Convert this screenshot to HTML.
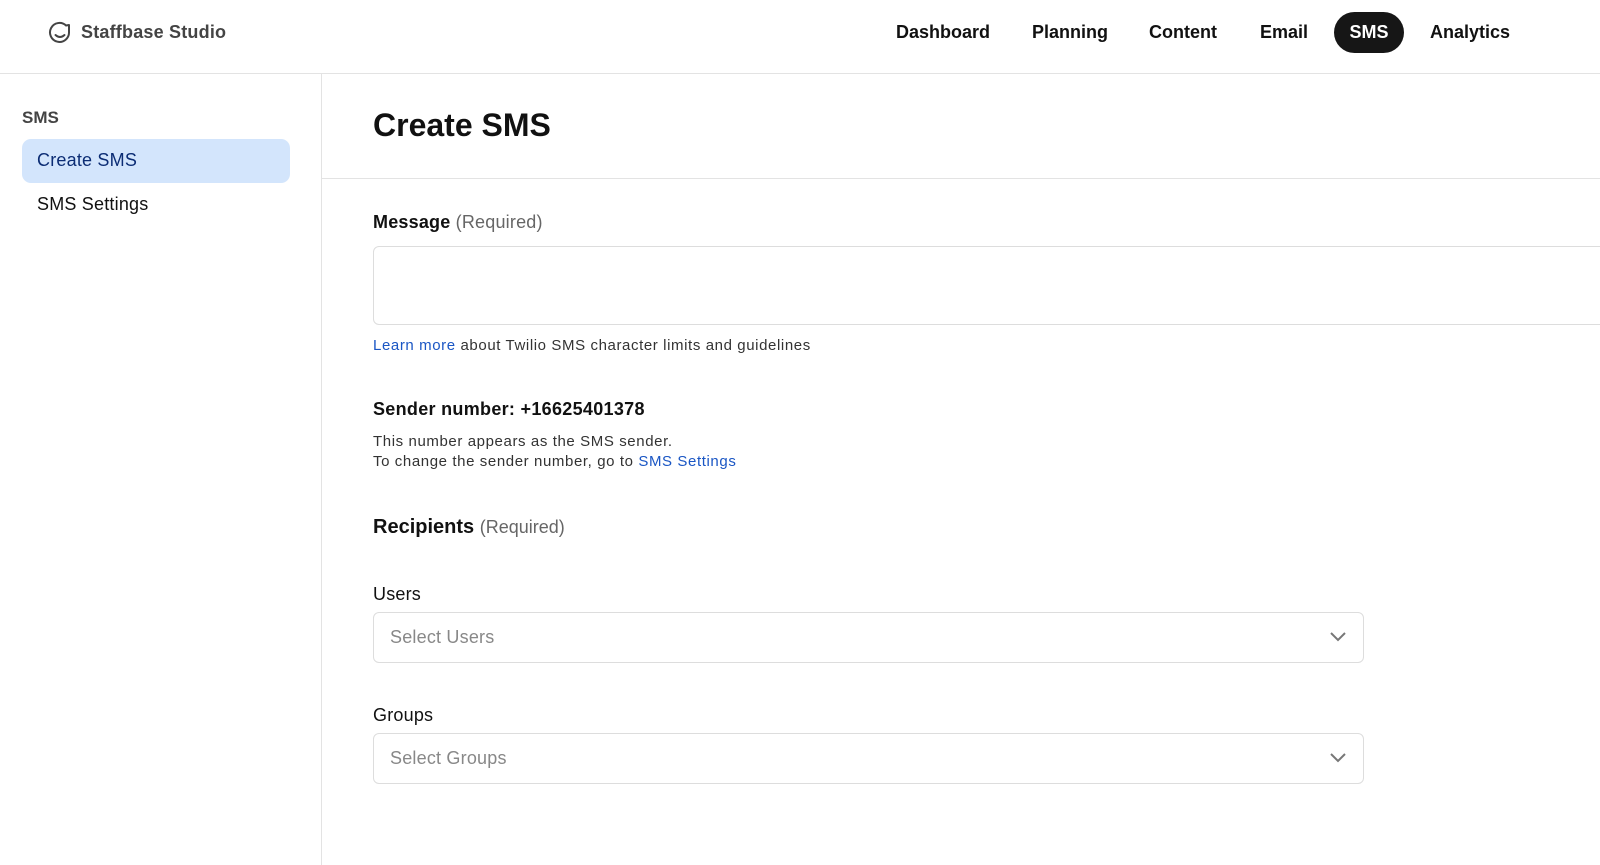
<!DOCTYPE html>
<html><head><meta charset="utf-8"><style>
*{margin:0;padding:0;box-sizing:border-box}
body{width:1600px;height:865px;overflow:hidden;background:#fff;font-family:"Liberation Sans",Arial,sans-serif;color:#111;position:relative}
.a{position:absolute;white-space:nowrap}
.nav{font-size:18px;font-weight:bold;top:22px;color:#111}
.lbl{font-size:18px;letter-spacing:0.2px}
.gray{color:#666;font-weight:normal}
.sel{position:absolute;left:373px;width:991px;height:51px;border:1px solid #ddd;border-radius:6px;font-size:18px;color:#888;padding-left:16px;line-height:49px;letter-spacing:0.2px}
.sel svg{position:absolute;right:16px;top:17px}
</style></head><body>
<div class="a" style="left:0;top:73px;width:1600px;height:1px;background:#e3e3e3"></div>
<div class="a" style="left:321px;top:73px;width:1px;height:792px;background:#e3e3e3"></div>
<div class="a" style="left:322px;top:178px;width:1278px;height:1px;background:#e3e3e3"></div>
<svg class="a" style="left:48px;top:21px" width="24" height="24" viewBox="0 0 24 24"><path d="M18 4.5 A9.5 9.5 0 1 0 21 11 L21 4 Z" fill="none" stroke="#444" stroke-width="2" stroke-linejoin="round"/><path d="M7.5 14 Q12 18 16.5 14" fill="none" stroke="#444" stroke-width="2" stroke-linecap="round"/></svg>
<div class="a" style="left:81px;top:22px;font-size:18px;font-weight:bold;color:#444;letter-spacing:0.2px">Staffbase Studio</div>
<div class="a nav" style="left:896px">Dashboard</div>
<div class="a nav" style="left:1032px">Planning</div>
<div class="a nav" style="left:1149px">Content</div>
<div class="a nav" style="left:1260px">Email</div>
<div class="a" style="left:1334px;top:12px;width:70px;height:41px;border-radius:21px;background:#161616;color:#fff;font-size:18px;font-weight:bold;text-align:center;line-height:41px">SMS</div>
<div class="a nav" style="left:1430px">Analytics</div>
<div class="a" style="left:22px;top:108px;font-size:17px;font-weight:bold;color:#444">SMS</div>
<div class="a" style="left:22px;top:139px;width:268px;height:44px;border-radius:9px;background:#d3e5fc"></div>
<div class="a" style="left:37px;top:150px;font-size:18px;color:#0b2c74;letter-spacing:0.2px">Create SMS</div>
<div class="a" style="left:37px;top:194px;font-size:18px;color:#111;letter-spacing:0.2px">SMS Settings</div>
<div class="a" style="left:373px;top:107px;font-size:32px;font-weight:bold">Create SMS</div>
<div class="a lbl" style="left:373px;top:212px"><b>Message</b> <span class="gray">(Required)</span></div>
<div class="a" style="left:373px;top:246px;width:1240px;height:79px;border:1px solid #ddd;border-radius:6px"></div>
<div class="a" style="left:373px;top:337px;font-size:15px;color:#333;letter-spacing:0.6px"><span style="color:#1a56c4">Learn more</span> about Twilio SMS character limits and guidelines</div>
<div class="a" style="left:373px;top:399px;font-size:18px;font-weight:bold;letter-spacing:0.3px">Sender number: +16625401378</div>
<div class="a" style="left:373px;top:432px;font-size:15px;color:#333;line-height:20px;letter-spacing:0.6px">This number appears as the SMS sender.<br>To change the sender number, go to <span style="color:#1a56c4">SMS Settings</span></div>
<div class="a" style="left:373px;top:516px;font-size:20px"><b>Recipients</b> <span class="gray" style="font-size:18px">(Required)</span></div>
<div class="a lbl" style="left:373px;top:584px">Users</div>
<div class="sel" style="top:612px">Select Users<svg width="18" height="14" viewBox="0 0 18 14"><path d="M2 3 L9 10 L16 3" fill="none" stroke="#777" stroke-width="2"/></svg></div>
<div class="a lbl" style="left:373px;top:705px">Groups</div>
<div class="sel" style="top:733px">Select Groups<svg width="18" height="14" viewBox="0 0 18 14"><path d="M2 3 L9 10 L16 3" fill="none" stroke="#777" stroke-width="2"/></svg></div>
</body></html>
